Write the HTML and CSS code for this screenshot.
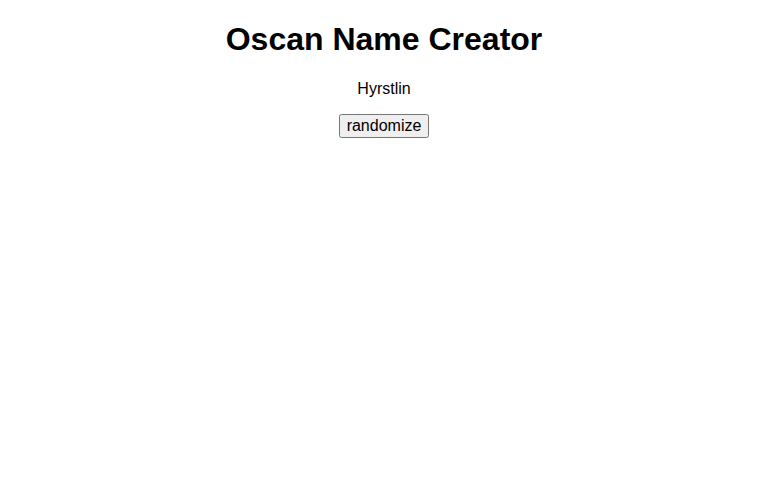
FILE: index.html
```html
<!DOCTYPE html>
<html>
<head>
<meta charset="utf-8">
<title>Oscan Name Creator</title>
<link rel="stylesheet" href="styles.css">
</head>
<body class="page">
<div class="app">
<h1 class="title">Oscan Name Creator</h1>
<p class="name">Hyrstlin</p>
<button class="btn">randomize</button>
</div>
</body>
</html>
```
FILE: styles.css
```css
.page {
  margin: 0;
  font-family: "Liberation Sans", Arial, sans-serif;
  background: #fff;
  color: #000;
}
.app {
  text-align: center;
}
.title {
  font-size: 32px;
  font-weight: bold;
  margin: 21.44px 0;
}
.name {
  font-size: 16px;
  margin: 16px 0;
}
.btn {
  font-family: "Liberation Sans", Arial, sans-serif;
  font-size: 16px;
}
```
